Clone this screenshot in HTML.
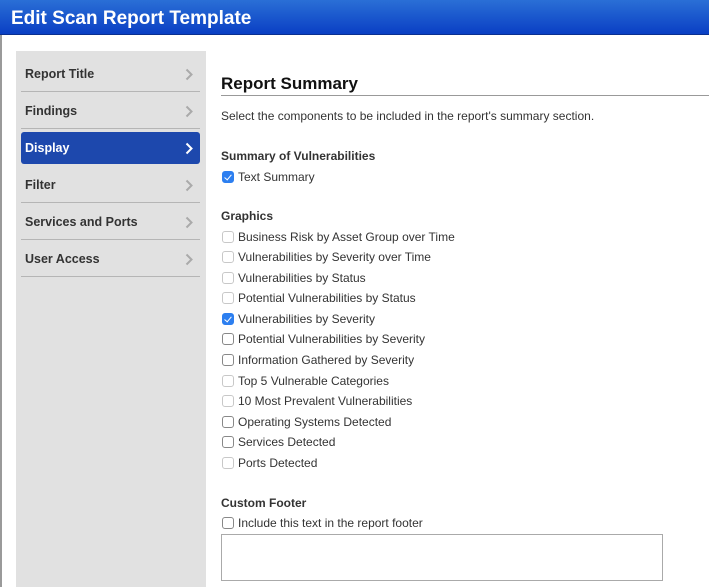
<!DOCTYPE html>
<html><head><style>
body{margin:0;width:709px;height:587px;overflow:hidden;background:#fff;font-family:"Liberation Sans",Arial,sans-serif;position:relative}
.hdr{position:absolute;left:0;top:0;width:709px;height:35px;background:linear-gradient(#2a6fd6,#0a3fc4);color:#fff;font-weight:bold;font-size:19px;line-height:37px;padding-left:11px;box-sizing:border-box;border-bottom:1px solid #0a2f90}
.lb{position:absolute;left:0;top:35px;width:2px;height:552px;background:#9a9a9a}
.side{position:absolute;left:16px;top:51px;width:190px;height:536px;background:#e1e1e1}
.it{position:absolute;left:21px;width:179px;height:36px;font-size:12.5px;font-weight:bold;color:#333;line-height:36px;padding-left:4px;box-sizing:border-box;border-bottom:1px solid #b5b5b5}
.it svg{position:absolute;right:7px;top:12px}
.it.sel{background:#1d48ad;color:#fff;border-radius:3px;border-bottom:none}
.it.sel svg{top:10px}
.t{position:absolute;font-size:12px;color:#333;white-space:nowrap}
.h{position:absolute;font-size:12px;font-weight:bold;color:#333;white-space:nowrap}
.cb{position:absolute;left:222px;width:10px;height:10px;border:1px solid #888;border-radius:3px;background:#fff}
.cb.l{border-color:#c8c8c8}
.cb.on{background:#2d7ff0;border-color:#2d7ff0}
.cb.on:after{content:"";position:absolute;left:3px;top:1px;width:3px;height:6px;border:solid #fff;border-width:0 1.5px 1.5px 0;transform:rotate(40deg)}
</style></head><body>
<div class="hdr">Edit Scan Report Template</div>
<div class="lb"></div>
<div class="side"></div>
<div class="it" style="top:56px">Report Title<svg width="8" height="13"><path d="M1.5 1.5L6.5 6.5L1.5 11.5" fill="none" stroke="#aaa" stroke-width="2"/></svg></div>
<div class="it" style="top:93px">Findings<svg width="8" height="13"><path d="M1.5 1.5L6.5 6.5L1.5 11.5" fill="none" stroke="#aaa" stroke-width="2"/></svg></div>
<div class="it sel" style="top:132px;height:32px;line-height:32px">Display<svg width="8" height="13"><path d="M1.5 1.5L6.5 6.5L1.5 11.5" fill="none" stroke="#fff" stroke-width="2"/></svg></div>
<div class="it" style="top:167px">Filter<svg width="8" height="13"><path d="M1.5 1.5L6.5 6.5L1.5 11.5" fill="none" stroke="#aaa" stroke-width="2"/></svg></div>
<div class="it" style="top:204px">Services and Ports<svg width="8" height="13"><path d="M1.5 1.5L6.5 6.5L1.5 11.5" fill="none" stroke="#aaa" stroke-width="2"/></svg></div>
<div class="it" style="top:241px">User Access<svg width="8" height="13"><path d="M1.5 1.5L6.5 6.5L1.5 11.5" fill="none" stroke="#aaa" stroke-width="2"/></svg></div>
<div class="h" style="left:221px;top:74px;font-size:17px;color:#111">Report Summary</div>
<div style="position:absolute;left:221px;top:95px;width:488px;height:1px;background:#999"></div>
<div class="t" style="left:221px;top:109px">Select the components to be included in the report's summary section.</div>
<div class="h" style="left:221px;top:149px">Summary of Vulnerabilities</div>
<div class="cb on" style="top:171px"></div><div class="t" style="left:238px;top:170px">Text Summary</div>
<div class="h" style="left:221px;top:209px">Graphics</div>
<div class="cb l" style="top:231px"></div><div class="t" style="left:238px;top:230px">Business Risk by Asset Group over Time</div>
<div class="cb l" style="top:251px"></div><div class="t" style="left:238px;top:250px">Vulnerabilities by Severity over Time</div>
<div class="cb l" style="top:272px"></div><div class="t" style="left:238px;top:271px">Vulnerabilities by Status</div>
<div class="cb l" style="top:292px"></div><div class="t" style="left:238px;top:291px">Potential Vulnerabilities by Status</div>
<div class="cb on" style="top:313px"></div><div class="t" style="left:238px;top:312px">Vulnerabilities by Severity</div>
<div class="cb" style="top:333px"></div><div class="t" style="left:238px;top:332px">Potential Vulnerabilities by Severity</div>
<div class="cb" style="top:354px"></div><div class="t" style="left:238px;top:353px">Information Gathered by Severity</div>
<div class="cb l" style="top:375px"></div><div class="t" style="left:238px;top:374px">Top 5 Vulnerable Categories</div>
<div class="cb l" style="top:395px"></div><div class="t" style="left:238px;top:394px">10 Most Prevalent Vulnerabilities</div>
<div class="cb" style="top:416px"></div><div class="t" style="left:238px;top:415px">Operating Systems Detected</div>
<div class="cb" style="top:436px"></div><div class="t" style="left:238px;top:435px">Services Detected</div>
<div class="cb l" style="top:457px"></div><div class="t" style="left:238px;top:456px">Ports Detected</div>
<div class="h" style="left:221px;top:496px">Custom Footer</div>
<div class="cb" style="top:517px"></div><div class="t" style="left:238px;top:516px">Include this text in the report footer</div>
<div style="position:absolute;left:221px;top:534px;width:440px;height:45px;border:1px solid #aaa"></div>
</body></html>
